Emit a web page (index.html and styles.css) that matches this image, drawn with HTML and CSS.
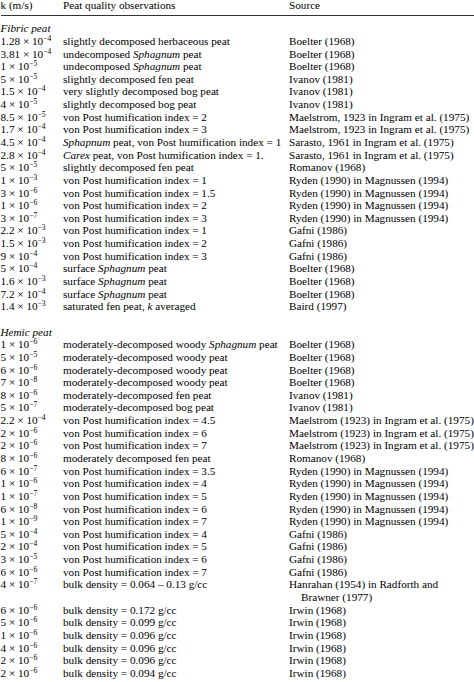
FILE: index.html
```html
<!DOCTYPE html>
<html>
<head>
<meta charset="utf-8">
<link rel="stylesheet" href="styles.css">
</head>
<body>
<div class="sheet">
  <div class="row head">
    <div>k (m/s)</div><div>Peat quality observations</div><div>Source</div>
  </div>
  <div class="body">
    <div class="row"><div class="group">Fibric peat</div></div>
    <div class="row"><div>1.28 × 10<sup>−4</sup></div><div>slightly decomposed herbaceous peat</div><div>Boelter (1968)</div></div>
    <div class="row"><div>3.81 × 10<sup>−4</sup></div><div>undecomposed <i>Sphagnum</i> peat</div><div>Boelter (1968)</div></div>
    <div class="row"><div>1 × 10<sup>−5</sup></div><div>undecomposed <i>Sphagnum</i> peat</div><div>Boelter (1968)</div></div>
    <div class="row"><div>5 × 10<sup>−5</sup></div><div>slightly decomposed fen peat</div><div>Ivanov (1981)</div></div>
    <div class="row"><div>1.5 × 10<sup>−4</sup></div><div>very slightly decomposed bog peat</div><div>Ivanov (1981)</div></div>
    <div class="row"><div>4 × 10<sup>−5</sup></div><div>slightly decomposed bog peat</div><div>Ivanov (1981)</div></div>
    <div class="row"><div>8.5 × 10<sup>−5</sup></div><div>von Post humification index = 2</div><div>Maelstrom, 1923 in Ingram et al. (1975)</div></div>
    <div class="row"><div>1.7 × 10<sup>−4</sup></div><div>von Post humification index = 3</div><div>Maelstrom, 1923 in Ingram et al. (1975)</div></div>
    <div class="row"><div>4.5 × 10<sup>−4</sup></div><div><i>Sphapnum</i> peat, von Post humification index = 1</div><div>Sarasto, 1961 in Ingram et al. (1975)</div></div>
    <div class="row"><div>2.8 × 10<sup>−4</sup></div><div><i>Carex</i> peat, von Post humification index = 1.</div><div>Sarasto, 1961 in Ingram et al. (1975)</div></div>
    <div class="row"><div>5 × 10<sup>−5</sup></div><div>slightly decomposed fen peat</div><div>Romanov (1968)</div></div>
    <div class="row"><div>1 × 10<sup>−3</sup></div><div>von Post humification index = 1</div><div>Ryden (1990) in Magnussen (1994)</div></div>
    <div class="row"><div>3 × 10<sup>−6</sup></div><div>von Post humification index = 1.5</div><div>Ryden (1990) in Magnussen (1994)</div></div>
    <div class="row"><div>1 × 10<sup>−6</sup></div><div>von Post humification index = 2</div><div>Ryden (1990) in Magnussen (1994)</div></div>
    <div class="row"><div>3 × 10<sup>−7</sup></div><div>von Post humification index = 3</div><div>Ryden (1990) in Magnussen (1994)</div></div>
    <div class="row"><div>2.2 × 10<sup>−3</sup></div><div>von Post humification index = 1</div><div>Gafni (1986)</div></div>
    <div class="row"><div>1.5 × 10<sup>−3</sup></div><div>von Post humification index = 2</div><div>Gafni (1986)</div></div>
    <div class="row"><div>9 × 10<sup>−4</sup></div><div>von Post humification index = 3</div><div>Gafni (1986)</div></div>
    <div class="row"><div>5 × 10<sup>−4</sup></div><div>surface <i>Sphagnum</i> peat</div><div>Boelter (1968)</div></div>
    <div class="row"><div>1.6 × 10<sup>−3</sup></div><div>surface <i>Sphagnum</i> peat</div><div>Boelter (1968)</div></div>
    <div class="row"><div>7.2 × 10<sup>−4</sup></div><div>surface <i>Sphagnum</i> peat</div><div>Boelter (1968)</div></div>
    <div class="row"><div>1.4 × 10<sup>−3</sup></div><div>saturated fen peat, <i>k</i> averaged</div><div>Baird (1997)</div></div>
    <div class="row"></div>
    <div class="row"><div class="group">Hemic peat</div></div>
    <div class="row"><div>1 × 10<sup>−6</sup></div><div>moderately-decomposed woody <i>Sphagnum</i> peat</div><div>Boelter (1968)</div></div>
    <div class="row"><div>5 × 10<sup>−5</sup></div><div>moderately-decomposed woody peat</div><div>Boelter (1968)</div></div>
    <div class="row"><div>6 × 10<sup>−6</sup></div><div>moderately-decomposed woody peat</div><div>Boelter (1968)</div></div>
    <div class="row"><div>7 × 10<sup>−8</sup></div><div>moderately-decomposed woody peat</div><div>Boelter (1968)</div></div>
    <div class="row"><div>8 × 10<sup>−6</sup></div><div>moderately-decomposed fen peat</div><div>Ivanov (1981)</div></div>
    <div class="row"><div>5 × 10<sup>−7</sup></div><div>moderately-decomposed bog peat</div><div>Ivanov (1981)</div></div>
    <div class="row"><div>2.2 × 10<sup>−4</sup></div><div>von Post humification index = 4.5</div><div>Maelstrom (1923) in Ingram et al. (1975)</div></div>
    <div class="row"><div>2 × 10<sup>−6</sup></div><div>von Post humification index = 6</div><div>Maelstrom (1923) in Ingram et al. (1975)</div></div>
    <div class="row"><div>2 × 10<sup>−6</sup></div><div>von Post humification index = 7</div><div>Maelstrom (1923) in Ingram et al. (1975)</div></div>
    <div class="row"><div>8 × 10<sup>−6</sup></div><div>moderately decomposed fen peat</div><div>Romanov (1968)</div></div>
    <div class="row"><div>6 × 10<sup>−7</sup></div><div>von Post humification index = 3.5</div><div>Ryden (1990) in Magnussen (1994)</div></div>
    <div class="row"><div>1 × 10<sup>−6</sup></div><div>von Post humification index = 4</div><div>Ryden (1990) in Magnussen (1994)</div></div>
    <div class="row"><div>1 × 10<sup>−7</sup></div><div>von Post humification index = 5</div><div>Ryden (1990) in Magnussen (1994)</div></div>
    <div class="row"><div>6 × 10<sup>−8</sup></div><div>von Post humification index = 6</div><div>Ryden (1990) in Magnussen (1994)</div></div>
    <div class="row"><div>1 × 10<sup>−9</sup></div><div>von Post humification index = 7</div><div>Ryden (1990) in Magnussen (1994)</div></div>
    <div class="row"><div>5 × 10<sup>−4</sup></div><div>von Post humification index = 4</div><div>Gafni (1986)</div></div>
    <div class="row"><div>2 × 10<sup>−4</sup></div><div>von Post humification index = 5</div><div>Gafni (1986)</div></div>
    <div class="row"><div>3 × 10<sup>−5</sup></div><div>von Post humification index = 6</div><div>Gafni (1986)</div></div>
    <div class="row"><div>6 × 10<sup>−6</sup></div><div>von Post humification index = 7</div><div>Gafni (1986)</div></div>
    <div class="row tall"><div>4 × 10<sup>−7</sup></div><div>bulk density = 0.064 – 0.13 g/cc</div><div>Hanrahan (1954) in Radforth and<br><span class="cont">Brawner (1977)</span></div></div>
    <div class="row"><div>6 × 10<sup>−6</sup></div><div>bulk density = 0.172 g/cc</div><div>Irwin (1968)</div></div>
    <div class="row"><div>5 × 10<sup>−6</sup></div><div>bulk density = 0.099 g/cc</div><div>Irwin (1968)</div></div>
    <div class="row"><div>1 × 10<sup>−6</sup></div><div>bulk density = 0.096 g/cc</div><div>Irwin (1968)</div></div>
    <div class="row"><div>4 × 10<sup>−6</sup></div><div>bulk density = 0.096 g/cc</div><div>Irwin (1968)</div></div>
    <div class="row"><div>2 × 10<sup>−6</sup></div><div>bulk density = 0.096 g/cc</div><div>Irwin (1968)</div></div>
    <div class="row"><div>2 × 10<sup>−6</sup></div><div>bulk density = 0.094 g/cc</div><div>Irwin (1968)</div></div>
  </div>
</div>
</body>
</html>
```
FILE: styles.css
```css
html, body {
  margin: 0;
  padding: 0;
  background: #ffffff;
}
body {
  font-family: "Liberation Serif", "Times New Roman", serif;
  font-size: 11.2px;
  color: #000000;
  overflow: hidden;
}
.sheet {
  margin-top: -1.3px;
  padding-left: 0.5px;
  width: 474px;
  box-sizing: border-box;
  overflow: hidden;
}
.row {
  display: grid;
  grid-template-columns: 62.5px 226px 1fr;
  height: 12.65px;
  line-height: 12.65px;
  white-space: nowrap;
}
.row > div {
  min-width: 0;
}
.row.tall {
  height: 25.3px;
}
.head {
  padding-bottom: 3.2px;
  border-bottom: 1px solid #333333;
}
.body {
  padding-top: 6.7px;
}
.group {
  font-style: italic;
}
.cont {
  padding-left: 12px;
}
sup {
  font-size: 7.6px;
  line-height: 0;
  vertical-align: 4px;
}
i {
  font-style: italic;
}
```
